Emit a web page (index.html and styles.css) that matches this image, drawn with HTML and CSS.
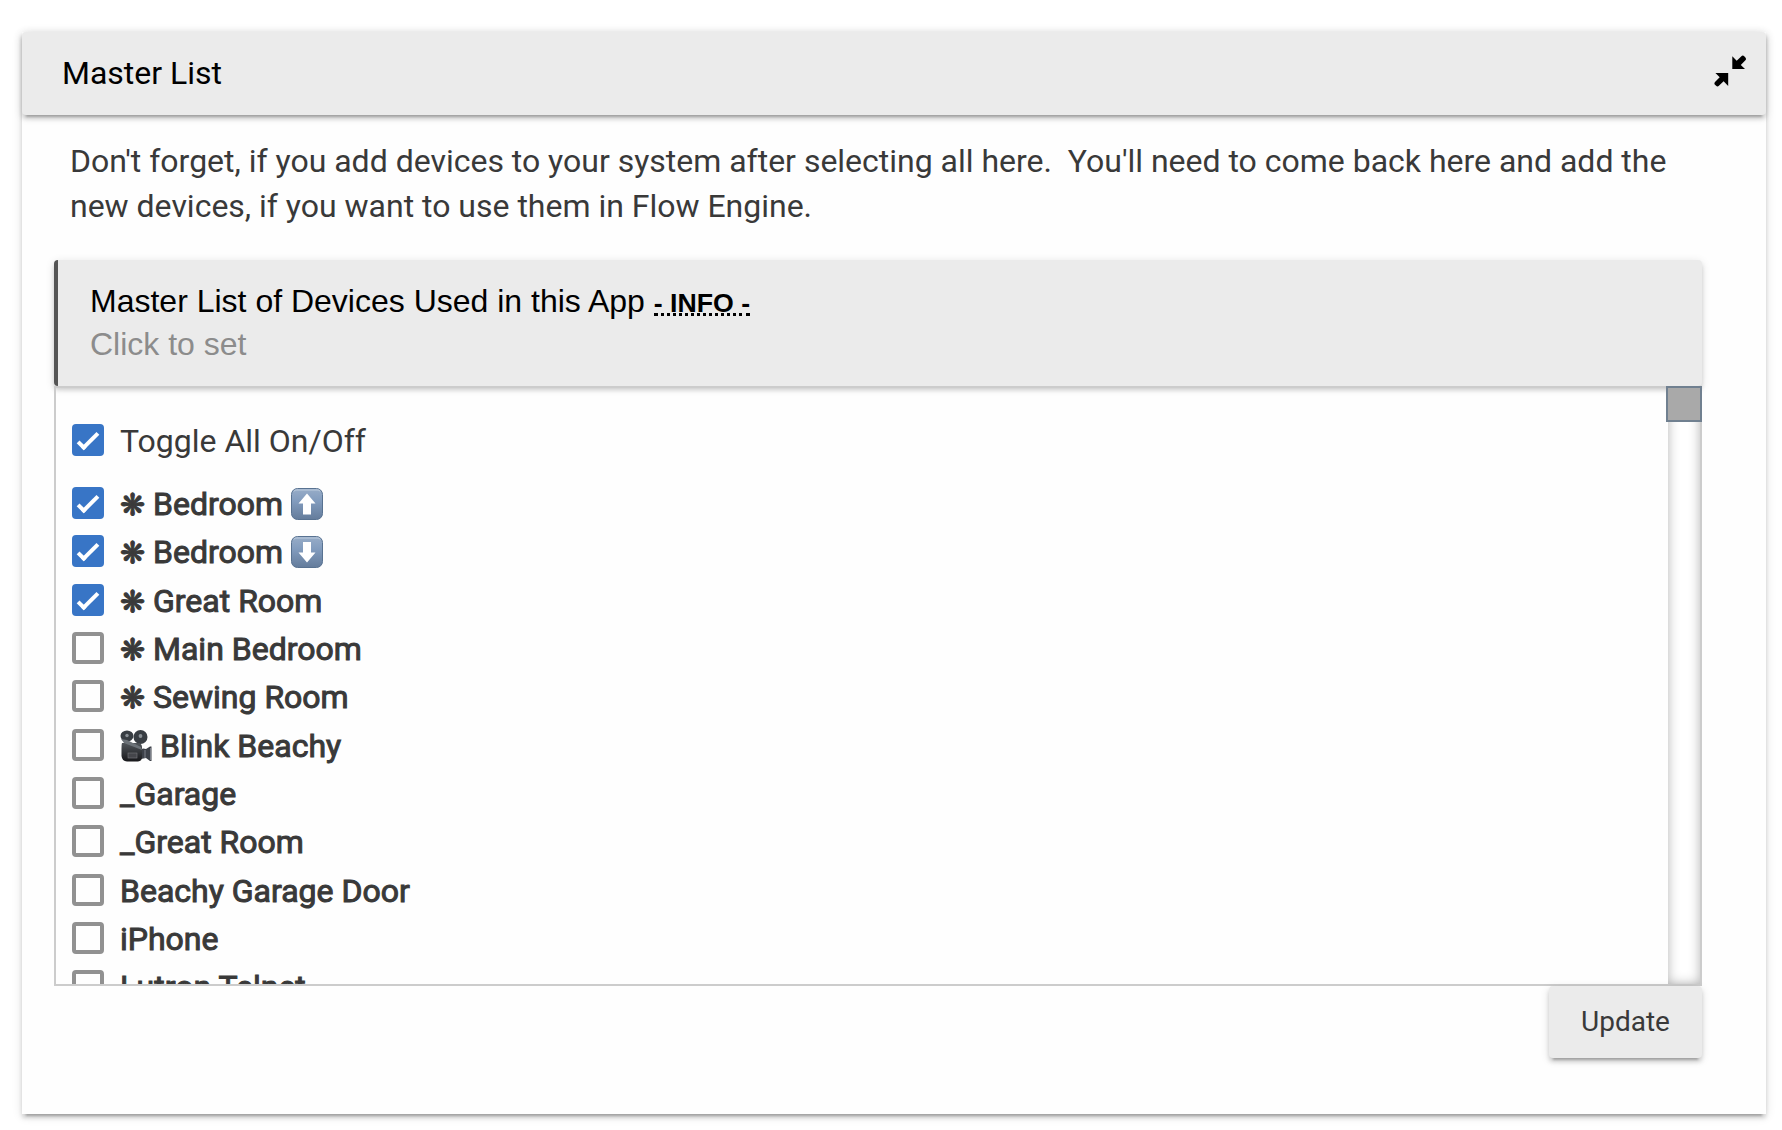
FILE: index.html
```html
<!DOCTYPE html>
<html lang="en">
<head>
    <meta charset="UTF-8">
    <meta name="viewport" content="width=device-width, initial-scale=1.0">
    <title>Master List</title>
    <link rel="stylesheet" href="styles.css">
</head>
<body>
    <!-- Shared icons -->
    <svg class="defs" width="0" height="0">
        <defs>
            <linearGradient id="tile" x1="0" y1="0" x2="0" y2="1">
                <stop offset="0" stop-color="#98adc8"/>
                <stop offset="0.4" stop-color="#829cbe"/>
                <stop offset="1" stop-color="#647c9b"/>
            </linearGradient>
            <linearGradient id="cam" x1="0" y1="0" x2="0" y2="1">
                <stop offset="0" stop-color="#50555a"/>
                <stop offset="1" stop-color="#17171a"/>
            </linearGradient>
        </defs>
    </svg>

    <div class="card">
        <div class="card-header">
            <h2>Master List</h2>
            <svg class="collapse" width="32" height="32" viewBox="0 0 32 32">
                <path d="M18.3 1.2V14H31l-4.2-4.1 4.6-4.6c.8-.8.8-2 0-2.9l-1.2-1.2c-.8-.8-2-.8-2.8 0l-4.7 4.6z"/>
                <path d="M14.2 31V18H1.4l4.3 4.2L1 26.900c-.8.8-.8 2 0 2.800l1.100 1.100c.8.8 2 .8 2.800 0l4.700-4.600z"/>
            </svg>
        </div>

        <div class="card-body">
            <p class="note">Don't forget, if you add devices to your system after selecting all here.&nbsp; You'll need to come back here and add the new devices, if you want to use them in Flow Engine.</p>

            <div class="device-input">
                <div class="device-title">Master List of Devices Used in this App <b class="info">- INFO -</b></div>
                <div class="device-value">Click to set</div>
            </div>

            <!-- Device list -->
            <div class="device-list">
                <div class="options">
                    <label class="row toggle"><input type="checkbox" checked><span>Toggle All On/Off</span></label>
                    <label class="row"><input type="checkbox" checked><span class="name"><i class="star">❋</i>Bedroom</span>
                        <svg class="arrow" width="32" height="32" viewBox="0 0 32 32"><rect x=".5" y=".5" width="31" height="31" rx="6" fill="url(#tile)" stroke="#587291"/><path d="M3 3.500Q3 2 5 2h22q2 0 2 1.500" fill="none" stroke="#bccbdd"/><path d="M16 5.500l8.500 10H20V26.500h-8V15.500H7.500z" fill="#fff"/></svg>
                    </label>
                    <label class="row"><input type="checkbox" checked><span class="name"><i class="star">❋</i>Bedroom</span>
                        <svg class="arrow" width="32" height="32" viewBox="0 0 32 32"><rect x=".5" y=".5" width="31" height="31" rx="6" fill="url(#tile)" stroke="#587291"/><path d="M3 3.500Q3 2 5 2h22q2 0 2 1.500" fill="none" stroke="#bccbdd"/><path d="M16 26.500l8.500-10H20V6h-8v10.500H7.500z" fill="#fff"/></svg>
                    </label>
                    <label class="row"><input type="checkbox" checked><span class="name"><i class="star">❋</i>Great Room</span></label>
                    <label class="row"><input type="checkbox"><span class="name"><i class="star">❋</i>Main Bedroom</span></label>
                    <label class="row"><input type="checkbox"><span class="name"><i class="star">❋</i>Sewing Room</span></label>
                    <label class="row"><input type="checkbox">
                        <svg class="camera" width="32" height="32" viewBox="0 0 32 32">
                            <path d="M20 20l3-1.500 3 .5 4-2.500h1.500V31H30l-4-3-5 1z" fill="#3c4048"/>
                            <path d="M2 13l16 0q4 .5 4 4v10q0 4-4 4.500H7Q2 31 1.500 26V18q0-4 .5-5z" fill="url(#cam)"/>
                            <ellipse cx="7" cy="6" rx="6.500" ry="5.500" fill="#383d43"/>
                            <circle cx="20.500" cy="7" r="7" fill="#383d43"/>
                            <path d="M1 9l6 1 14 7 1 3-18-7z" fill="#6c7278"/>
                            <circle cx="7" cy="5.500" r="1.700" fill="#8a9096"/>
                            <circle cx="20.500" cy="6" r="1.900" fill="#8a9096"/>
                            <rect x="8" y="23" width="9" height="5" fill="#45464b" stroke="#77777c" stroke-width=".6"/>
                            <path d="M25 20v8M30.500 18v12" stroke="#8b8f99" stroke-width=".8"/>
                        </svg><span class="name">Blink Beachy</span></label>
                    <label class="row"><input type="checkbox"><span class="name">_Garage</span></label>
                    <label class="row"><input type="checkbox"><span class="name">_Great Room</span></label>
                    <label class="row"><input type="checkbox"><span class="name">Beachy Garage Door</span></label>
                    <label class="row"><input type="checkbox"><span class="name">iPhone</span></label>
                    <label class="row"><input type="checkbox"><span class="name">Lutron Telnet</span></label>
                </div>
                <div class="scrollbar"><div class="thumb"></div></div>
            </div>

            <button class="update">Update</button>
        </div>
    </div>
</body>
</html>
```
FILE: styles.css
```css
* {
    margin: 0;
    padding: 0;
    box-sizing: border-box;
}

body {
    font-family: Roboto, sans-serif;
    font-size: 32px;
    color: #393939;
    background-color: #fff;
    min-height: 100vh;
    padding: 32px 16px 16px 22px;
}

.defs {
    position: absolute;
}

.card {
    height: 1082px;
    background-color: #fefefe;
    box-shadow: 0 4px 4px rgba(0, 0, 0, 0.14), 0 6px 2px -4px rgba(0, 0, 0, 0.2), 0 2px 10px rgba(0, 0, 0, 0.12);
}

.card-header {
    height: 83px;
    padding: 0 20px 0 40px;
    display: flex;
    align-items: center;
    justify-content: space-between;
    background-color: #ebebeb;
    border-radius: 4px;
    box-shadow: 0 4px 4px rgba(0, 0, 0, 0.14), 0 6px 2px -4px rgba(0, 0, 0, 0.2), 0 2px 10px rgba(0, 0, 0, 0.12);
}

h2 {
    font-size: 32px;
    font-weight: 400;
    color: #000;
    margin-bottom: 2px;
}

.collapse {
    margin-bottom: 5px;
}

.card-body {
    padding: 24px 64px 0 32px;
    display: flex;
    flex-direction: column;
}

.note {
    height: 121px;
    padding-left: 16px;
    line-height: 45.3px;
    letter-spacing: -0.01px;
}

.device-input {
    height: 126px;
    padding: 20px 32px;
    font-family: "Liberation Sans", Arial, sans-serif;
    line-height: 43px;
    background-color: #ebebeb;
    border-left: 4px solid #555;
    border-radius: 4px;
    box-shadow: 0 4px 4px rgba(0, 0, 0, 0.14), 0 2px 10px rgba(0, 0, 0, 0.12);
}

.device-title {
    color: #000;
}

.info {
    display: inline-block;
    font-size: 26.7px;
    line-height: 19px;
    border-bottom: 3px dotted #000;
}

.device-value {
    color: #8c8c8c;
}

.device-list {
    height: 600px;
    display: flex;
    border: 2px solid #ccc;
}

.options {
    flex: 1;
    padding: 36px 0 0 16px;
    overflow: hidden;
}

.row {
    height: 48.33px;
    display: flex;
    align-items: flex-start;
    line-height: 35px;
    white-space: nowrap;
}

.toggle {
    height: 63px;
}

.row input {
    appearance: none;
    width: 32px;
    height: 32px;
    margin-right: 16px;
    border: 4px solid #919191;
    border-radius: 4px;
}

.row input:checked {
    background: #3875c6;
    border: none;
}

.row input:checked::after {
    content: "";
    display: block;
    box-sizing: border-box;
    width: 10px;
    height: 22px;
    margin: 4px 0 0 11px;
    border: solid #fff;
    border-width: 0 4px 4px 0;
    transform: rotate(45deg);
}

.name {
    -webkit-text-stroke: 1px #393939;
}

.star {
    display: inline-block;
    width: 33px;
    font: 30px/30px "DejaVu Sans", sans-serif;
}

.arrow {
    margin: 1px 0 0 8px;
}

.camera {
    margin: 1px 8px 0 0;
}

.scrollbar {
    width: 32px;
    background-color: #fff;
    box-shadow: inset 0 0 12px rgba(0, 0, 0, 0.3);
}

.thumb {
    position: relative;
    top: -2px;
    left: -2px;
    width: 36px;
    height: 36px;
    background-color: #a9a9a9;
    border: 2px solid #708090;
}

.update {
    align-self: flex-end;
    width: 153px;
    height: 72px;
    padding-bottom: 2px;
    font-family: Roboto, sans-serif;
    font-size: 28px;
    color: #393939;
    background-color: #ebebeb;
    border: none;
    border-radius: 4px;
    box-shadow: 0 4px 4px rgba(0, 0, 0, 0.14), 0 6px 2px -4px rgba(0, 0, 0, 0.2), 0 2px 10px rgba(0, 0, 0, 0.12);
}
```
